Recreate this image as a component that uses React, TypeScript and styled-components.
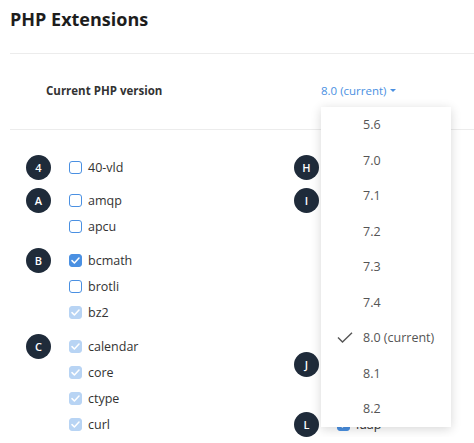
import React, { useState } from "react";
import styled, { createGlobalStyle } from "styled-components";

const GlobalStyle = createGlobalStyle`
  html, body {
    margin: 0;
    padding: 0;
    background: #ffffff;
    overflow: hidden;
  }
  body {
    font-family: "Open Sans", "Liberation Sans", sans-serif;
    color: #333333;
  }
`;

const Page = styled.div`
  padding-left: 10px;
`;

const Title = styled.h1`
  margin: 0;
  height: 53px;
  box-sizing: border-box;
  padding-top: 7px;
  font-size: 18px;
  font-weight: 700;
  color: #1d1d1d;
`;

const Divider = styled.div`
  height: 1px;
  background: #ececec;
`;

const VersionRow = styled.div`
  height: 75px;
  display: flex;
  align-items: center;
  padding-left: 36px;
  padding-bottom: 2px;
  box-sizing: border-box;
`;

const VersionLabel = styled.div`
  width: 275px;
  font-size: 11.5px;
  font-weight: 700;
  color: #333;
`;

const VersionPicker = styled.div`
  position: relative;
`;

const VersionValue = styled.button`
  border: none;
  background: none;
  padding: 0;
  font-family: inherit;
  font-size: 11.5px;
  color: #4a90e2;
  cursor: pointer;
  display: flex;
  align-items: center;
  gap: 3px;
`;

const Caret = styled.span`
  width: 0;
  height: 0;
  border-left: 3px solid transparent;
  border-right: 3px solid transparent;
  border-top: 3px solid #4a90e2;
`;

const Menu = styled.ul`
  position: absolute;
  top: 24px;
  left: 0;
  width: 130px;
  margin: 0;
  padding: 0;
  list-style: none;
  background: #fff;
  box-shadow: 0 2px 10px rgba(0, 0, 0, 0.16);
  z-index: 10;
`;

const MenuItem = styled.li`
  position: relative;
  height: 35.5px;
  display: flex;
  align-items: center;
  padding-left: 42px;
  font-size: 12.5px;
  color: #555;
  cursor: pointer;
`;

const Tick = styled.svg`
  position: absolute;
  left: 16px;
  top: 12px;
`;

const Groups = styled.div`
  display: grid;
  grid-template-columns: 268px 1fr;
  padding-top: 24px;
`;

const Column = styled.div`
  display: flex;
  flex-direction: column;
  gap: 7.75px;
`;

const Group = styled.div`
  display: flex;
  align-items: flex-start;
  padding-left: 16px;
`;

const Badge = styled.div`
  width: 25px;
  height: 25px;
  border-radius: 50%;
  background: #1f2b3a;
  color: #fff;
  font-size: 11px;
  font-weight: 600;
  display: flex;
  align-items: center;
  justify-content: center;
  margin-top: 0.5px;
  flex-shrink: 0;
`;

const Items = styled.div`
  display: flex;
  flex-direction: column;
  margin-left: 18px;
`;

const Item = styled.label`
  height: 26px;
  display: flex;
  align-items: center;
  gap: 6px;
  font-size: 12.5px;
  color: #333;
  cursor: pointer;
`;

const Box = styled.span<{ $checked: boolean; $disabled: boolean }>`
  width: 13px;
  height: 13px;
  box-sizing: border-box;
  border-radius: 3px;
  display: flex;
  align-items: center;
  justify-content: center;
  border: 1.5px solid
    ${(p) => (p.$disabled ? "#b8d4f4" : "#4a90e2")};
  background: ${(p) =>
    p.$checked ? (p.$disabled ? "#b8d4f4" : "#4a90e2") : "#fff"};
`;

type Ext = { name: string; checked?: boolean; disabled?: boolean };
type Grp = { letter: string; items: Ext[] };

const leftGroups: Grp[] = [
  { letter: "4", items: [{ name: "40-vld" }] },
  { letter: "A", items: [{ name: "amqp" }, { name: "apcu" }] },
  {
    letter: "B",
    items: [
      { name: "bcmath", checked: true },
      { name: "brotli" },
      { name: "bz2", checked: true, disabled: true },
    ],
  },
  {
    letter: "C",
    items: [
      { name: "calendar", checked: true, disabled: true },
      { name: "core", checked: true, disabled: true },
      { name: "ctype", checked: true, disabled: true },
      { name: "curl", checked: true, disabled: true },
    ],
  },
];

const rightGroups: Grp[] = [
  { letter: "H", items: [{ name: "hash", checked: true, disabled: true }] },
  {
    letter: "I",
    items: [
      { name: "iconv", checked: true, disabled: true },
      { name: "igbinary" },
      { name: "imagick" },
      { name: "imap" },
      { name: "inotify" },
      { name: "intl" },
    ],
  },
  {
    letter: "J",
    items: [{ name: "json", checked: true, disabled: true }, { name: "jsmin" }],
  },
  { letter: "L", items: [{ name: "ldap", checked: true }] },
];

const versions = ["5.6", "7.0", "7.1", "7.2", "7.3", "7.4", "8.0", "8.1", "8.2"];

function CheckMark() {
  return (
    <svg width="9" height="7" viewBox="0 0 9 7">
      <path
        d="M1 3.6 L3.4 6 L8 1"
        fill="none"
        stroke="#fff"
        strokeWidth="1.5"
        strokeLinecap="round"
        strokeLinejoin="round"
      />
    </svg>
  );
}

function GroupList({ groups }: { groups: Grp[] }) {
  return (
    <Column>
      {groups.map((g) => (
        <Group key={g.letter}>
          <Badge>{g.letter}</Badge>
          <Items>
            {g.items.map((it) => (
              <Item key={it.name}>
                <Box $checked={!!it.checked} $disabled={!!it.disabled}>
                  {it.checked && <CheckMark />}
                </Box>
                {it.name}
              </Item>
            ))}
          </Items>
        </Group>
      ))}
    </Column>
  );
}

export default function App() {
  const [version, setVersion] = useState<string>("8.0");
  const [open, setOpen] = useState<boolean>(true);

  return (
    <Page>
      <GlobalStyle />
      <Title>PHP Extensions</Title>
      <Divider />
      <VersionRow>
        <VersionLabel>Current PHP version</VersionLabel>
        <VersionPicker>
          <VersionValue onClick={() => setOpen(!open)}>
            8.0 (current)
            <Caret />
          </VersionValue>
          {open && (
            <Menu>
              {versions.map((v) => (
                <MenuItem key={v} onClick={() => setVersion(v)}>
                  {v === version && (
                    <Tick width="16" height="11" viewBox="0 0 16 11">
                      <path
                        d="M1 5.5 L5.5 10 L15 0.8"
                        fill="none"
                        stroke="#555"
                        strokeWidth="1.4"
                      />
                    </Tick>
                  )}
                  {v === "8.0" ? "8.0 (current)" : v}
                </MenuItem>
              ))}
            </Menu>
          )}
        </VersionPicker>
      </VersionRow>
      <Divider />
      <Groups>
        <GroupList groups={leftGroups} />
        <GroupList groups={rightGroups} />
      </Groups>
    </Page>
  );
}
